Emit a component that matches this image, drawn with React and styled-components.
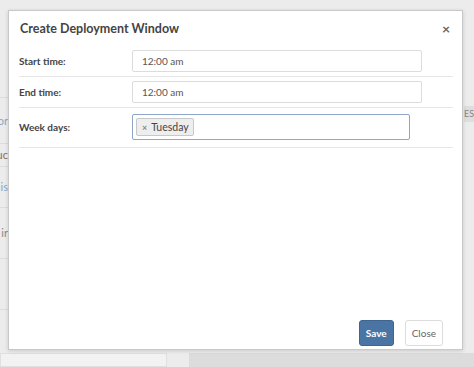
import React from "react"
import styled, { createGlobalStyle } from "styled-components"

const GlobalStyle = createGlobalStyle`
  html, body {
    margin: 0;
    padding: 0;
    background: #ededed;
    font-family: Lato, "Open Sans", "Liberation Sans", sans-serif;
  }
`

const Page = styled.div`
  position: relative;
  width: 474px;
  height: 367px;
  overflow: hidden;
  background: #ececec;
`

const BackList = styled.div`
  display: flex;
  flex-direction: column;
  padding-top: 97px;
  width: 8px;
`

const BackRow = styled.div`
  height: ${p => p.h}px;
  border-top: 1px solid #dcdcdc;
  font-size: 11px;
  line-height: ${p => p.h}px;
  color: ${p => p.color || "#999"};
  white-space: nowrap;
  direction: rtl;
  overflow: hidden;
`

const SideChip = styled.div`
  position: absolute;
  left: 464px;
  top: 106px;
  width: 14px;
  height: 16px;
  background: #dedede;
  font-size: 9px;
  line-height: 16px;
  color: #888;
`

const BottomBar = styled.div`
  position: absolute;
  left: 0;
  top: 353px;
  width: 474px;
  height: 14px;
  display: flex;
  gap: 22px;
`

const BottomBox = styled.div`
  width: 165px;
  border: 1px solid #e0e0e0;
  background: #f2f2f2;
`

const BottomStrip = styled.div`
  flex: 1;
  background: #dcdcdc;
`

const Modal = styled.div`
  position: absolute;
  left: 8px;
  top: 10px;
  width: 453px;
  height: 338px;
  background: #fff;
  border: 1px solid #c8c8c8;
  box-shadow: 0 1px 4px rgba(0, 0, 0, 0.15);
  display: flex;
  flex-direction: column;
`

const Header = styled.div`
  height: 35px;
  display: flex;
  align-items: center;
  justify-content: space-between;
  padding: 0 12px 0 11px;
`

const Title = styled.h4`
  margin: 0;
  font-size: 12.5px;
  font-weight: 700;
  color: #444;
`

const CloseX = styled.span`
  font-size: 14px;
  font-weight: 700;
  color: #666;
  line-height: 1;
`

const Body = styled.div`
  flex: 1;
  padding: 0 9px 0 10px;
`

const Row = styled.div`
  display: grid;
  grid-template-columns: 113px 1fr;
  align-items: center;
  padding: ${p => p.pad || "4px 0 4px"};
  border-bottom: 1px solid #e6e6e6;
`

const Label = styled.label`
  font-size: 10px;
  font-weight: 700;
  color: #444;
`

const Input = styled.div`
  box-sizing: border-box;
  width: ${p => p.w}px;
  height: ${p => p.h || 22}px;
  border: 1px solid ${p => (p.focus ? "#8ea6c8" : "#dcdcdc")};
  border-radius: 2px;
  padding: 0 9px;
  display: flex;
  align-items: center;
  font-size: 10px;
  color: #555;
  background: #fff;
`

const Tag = styled.span`
  box-sizing: border-box;
  height: 18px;
  margin-left: -6px;
  padding: 0 4px 0 5px;
  border: 1px solid #c8c8c8;
  border-radius: 2px;
  background: #eeeeee;
  display: inline-flex;
  align-items: center;
  gap: 4px;
  font-size: 10.5px;
  color: #444;
`

const TagX = styled.span`
  font-size: 9px;
  color: #888;
  font-weight: 700;
`

const Footer = styled.div`
  display: flex;
  justify-content: flex-end;
  gap: 11px;
  padding: 0 19px 3px 0;
`

const Button = styled.button`
  height: 26px;
  padding: 0 6px;
  border-radius: 3px;
  font-family: inherit;
  font-size: 10px;
  font-weight: ${p => (p.primary ? 700 : 400)};
  color: ${p => (p.primary ? "#fff" : "#666")};
  background: ${p => (p.primary ? "#4a74a3" : "#fff")};
  border: 1px solid ${p => (p.primary ? "#3d6590" : "#dcdcdc")};
`

export default function App() {
  return (
    <Page>
      <GlobalStyle />
      <BackList>
        <BackRow h={45} color="#8aa6c8">or</BackRow>
        <BackRow h={22} color="#8a6a5a">uc</BackRow>
        <BackRow h={40} color="#8aa6c8">is</BackRow>
        <BackRow h={50} color="#888">ir</BackRow>
        <BackRow h={50} />
        <BackRow h={40} />
      </BackList>
      <SideChip>ES</SideChip>
      <BottomBar>
        <BottomBox />
        <BottomStrip />
      </BottomBar>
      <Modal>
        <Header>
          <Title>Create Deployment Window</Title>
          <CloseX>×</CloseX>
        </Header>
        <Body>
          <Row>
            <Label>Start time:</Label>
            <Input w={290}>12:00 am</Input>
          </Row>
          <Row>
            <Label>End time:</Label>
            <Input w={290}>12:00 am</Input>
          </Row>
          <Row pad="6px 0 7px">
            <Label>Week days:</Label>
            <Input w={278} h={26} focus>
              <Tag>
                <TagX>×</TagX>Tuesday
              </Tag>
            </Input>
          </Row>
        </Body>
        <Footer>
          <Button primary>Save</Button>
          <Button>Close</Button>
        </Footer>
      </Modal>
    </Page>
  )
}
